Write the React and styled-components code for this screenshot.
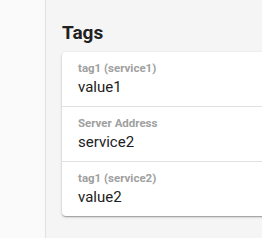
import React from 'react';
import styled, { createGlobalStyle } from 'styled-components';

const GlobalStyle = createGlobalStyle`
  html, body {
    margin: 0;
    padding: 0;
    overflow: hidden;
    background: #f5f5f5;
    font-family: Roboto, "Noto Sans", sans-serif;
  }
`;

const Layout = styled.div`
  display: flex;
  width: 262px;
  height: 238px;
  overflow: hidden;
`;

const Sidebar = styled.aside`
  flex: 0 0 45px;
  background: #fafafa;
  border-right: 1px solid #e0e0e0;
`;

const Main = styled.main`
  flex: 1 0 auto;
  padding: 21px 0 0 16px;
  background: #f5f5f5;
`;

const Title = styled.h2`
  margin: 0 0 7px;
  font-size: 19px;
  line-height: 24px;
  font-weight: 700;
  color: #212121;
`;

const Card = styled.section`
  width: 320px;
  background: #fff;
  border-radius: 4px;
  box-shadow: 0 1px 3px rgba(0, 0, 0, 0.2), 0 1px 1px rgba(0, 0, 0, 0.14),
    0 2px 1px -1px rgba(0, 0, 0, 0.12);
`;

const Row = styled.div`
  height: ${(p) => (p.first ? '54px' : '55px')};
  padding: 9px 16px 0;
  box-sizing: border-box;
  border-top: ${(p) => (p.first ? 'none' : '1px solid #e0e0e0')};
`;

const Label = styled.div`
  font-size: 11.5px;
  line-height: 15px;
  font-weight: 700;
  color: #a0a0a0;
`;

const Value = styled.div`
  font-size: 15px;
  line-height: 22px;
  color: #212121;
`;

const tags = [
  { label: 'tag1 (service1)', value: 'value1' },
  { label: 'Server Address', value: 'service2' },
  { label: 'tag1 (service2)', value: 'value2' },
];

const App = () => (
  <Layout>
    <GlobalStyle />
    <Sidebar />
    <Main>
      <Title>Tags</Title>
      <Card>
        {tags.map((t, i) => (
          <Row key={i} first={i === 0}>
            <Label>{t.label}</Label>
            <Value>{t.value}</Value>
          </Row>
        ))}
      </Card>
    </Main>
  </Layout>
);

export default App;
